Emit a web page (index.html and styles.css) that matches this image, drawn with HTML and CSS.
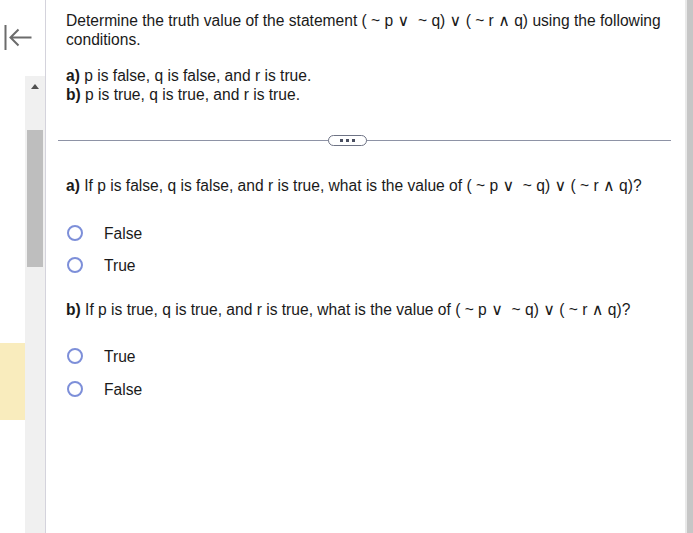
FILE: index.html
```html
<!DOCTYPE html>
<html>
<head>
<meta charset="utf-8">
<link rel="stylesheet" href="styles.css">
</head>
<body>
<div class="app">
  <aside class="rail">
    <div class="rail-top">
      <svg class="collapse" width="34" height="28" viewBox="0 0 34 28">
        <path d="M5.5 1v25" stroke="#6b6b6b" stroke-width="2" fill="none"/>
        <path d="M10.5 13.5h21M18.5 5.5l-8 8 8 8" stroke="#6b6b6b" stroke-width="2" fill="none"/>
      </svg>
    </div>
    <div class="rail-body">
      <div class="rail-left"><div class="highlight"></div></div>
      <div class="track">
        <div class="arrow"></div>
        <div class="thumb"></div>
      </div>
    </div>
  </aside>
  <main class="content">
    <p class="intro">Determine the truth value of the statement <span class="expr">( ~ p <span class="op">∨</span>&nbsp; ~ q) <span class="op">∨</span> ( ~ r <span class="op">∧</span> q)</span> using the following conditions.</p>
    <p class="conds"><b>a)</b> p is false, q is false, and r is true.<br><b>b)</b> p is true, q is true, and r is true.</p>
    <div class="divider"><span class="pill"><i></i><i></i><i></i></span></div>
    <p class="question"><b>a)</b> If p is false, q is false, and r is true, what is the value of <span class="expr">( ~ p <span class="op">∨</span>&nbsp; ~ q) <span class="op">∨</span> ( ~ r <span class="op">∧</span> q)</span>?</p>
    <ul class="options">
      <li><span class="radio"></span>False</li>
      <li><span class="radio"></span>True</li>
    </ul>
    <p class="question q2"><b>b)</b> If p is true, q is true, and r is true, what is the value of <span class="expr">( ~ p <span class="op">∨</span>&nbsp; ~ q) <span class="op">∨</span> ( ~ r <span class="op">∧</span> q)</span>?</p>
    <ul class="options opts2">
      <li><span class="radio"></span>True</li>
      <li><span class="radio"></span>False</li>
    </ul>
  </main>
  <div class="outer-scroll"></div>
</div>
</body>
</html>
```
FILE: styles.css
```css
html, body {
  margin: 0;
  padding: 0;
  background: #fff;
}
body {
  font-family: "Liberation Sans", Arial, sans-serif;
  font-size: 15.6px;
  color: #1a1a1a;
}
.app {
  display: flex;
  height: 533px;
  overflow: hidden;
}
.rail {
  width: 45px;
  flex: none;
  display: flex;
  flex-direction: column;
  border-right: 1px solid #d4d3dc;
}
.rail-top {
  height: 76px;
  flex: none;
  position: relative;
}
.collapse {
  position: absolute;
  left: 0;
  top: 24px;
}
.rail-body {
  flex: 1;
  display: flex;
}
.rail-left {
  width: 25px;
  flex: none;
}
.highlight {
  margin-top: 267px;
  height: 77px;
  background: #f9ecbd;
}
.track {
  width: 20px;
  flex: none;
  background: #f0f0f0;
  display: flex;
  flex-direction: column;
  align-items: center;
}
.arrow {
  margin-top: 8px;
  width: 0;
  height: 0;
  border-left: 4px solid transparent;
  border-right: 4px solid transparent;
  border-bottom: 5px solid #505050;
}
.thumb {
  margin-top: 41px;
  width: 16px;
  height: 137px;
  background: #bebebe;
}
.content {
  flex: 1;
  padding: 0 14px 0 20px;
}
.intro {
  margin: 11px 0 0;
  line-height: 19px;
  width: 605px;
}
.conds {
  margin: 17px 0 0;
  line-height: 19px;
}
.expr {
  white-space: nowrap;
}
.op {
  font-family: "DejaVu Sans", sans-serif;
  font-size: 16px;
  line-height: 1;
}
.divider {
  margin: 36px 0 0 -8px;
  height: 1px;
  background: #8e93a6;
  position: relative;
}
.pill {
  position: absolute;
  top: -5px;
  left: 270px;
  width: 37px;
  height: 9px;
  border: 1px solid #6e7385;
  border-radius: 6px;
  background: #fff;
  display: flex;
  align-items: center;
  justify-content: center;
  gap: 3px;
}
.pill i {
  width: 3px;
  height: 3px;
  background: #4a4f60;
}
.question {
  margin: 35px 0 0;
  line-height: 19px;
}
.q2 {
  margin-top: 19px;
}
.options {
  list-style: none;
  margin: 22px 0 0;
  padding: 0;
}
.opts2 {
  margin-top: 21px;
}
.options li {
  display: flex;
  align-items: center;
  height: 32px;
  line-height: 19px;
}
.opts2 li + li {
  height: 33px;
  padding-top: 1px;
  box-sizing: border-box;
}
.radio {
  width: 12px;
  height: 12px;
  border: 2px solid #7d8fd9;
  border-radius: 50%;
  margin-left: 1px;
  margin-right: 21px;
  flex: none;
}
.outer-scroll {
  width: 6px;
  flex: none;
  background: #c6c6c6;
  border-left: 2px solid #e9e9e9;
}
```
